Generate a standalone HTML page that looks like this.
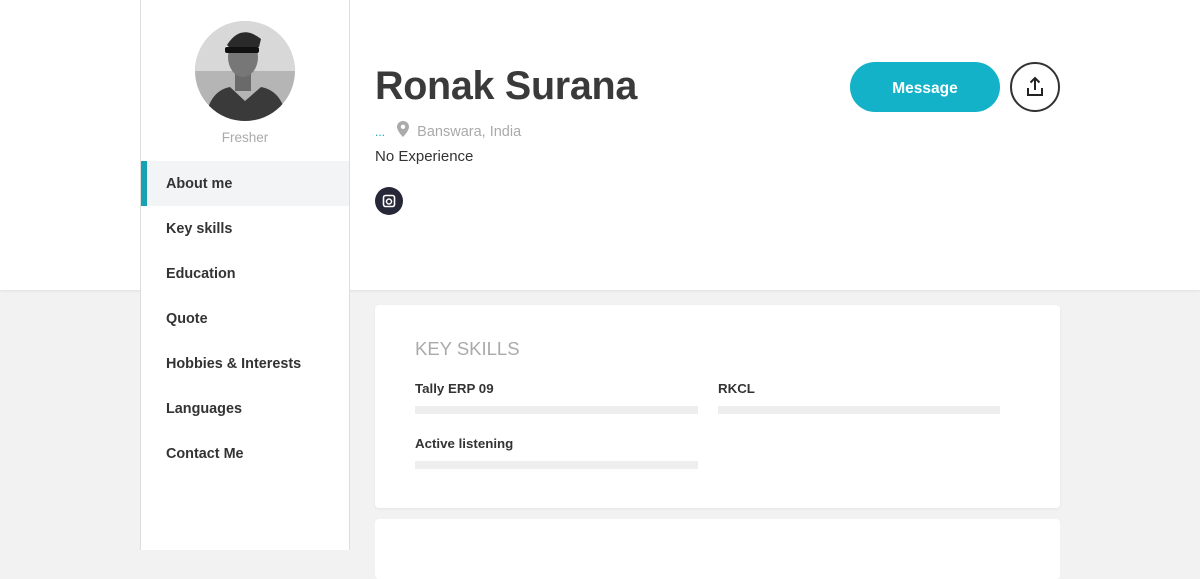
<!DOCTYPE html>
<html><head><meta charset="utf-8"><style>
*{margin:0;padding:0;box-sizing:border-box}
body{width:1200px;height:550px;overflow:hidden;background:#f2f2f2;font-family:"Liberation Sans",sans-serif;position:relative}
.top{position:absolute;left:0;top:0;width:1200px;height:290px;background:#fff;box-shadow:0 1px 3px rgba(0,0,0,.08)}
.side{position:absolute;left:140px;top:0;width:210px;height:550px;background:#fff;border-left:1px solid #ddd;border-right:1px solid #ddd}
.av{position:absolute;left:54px;top:21px;width:100px;height:100px;border-radius:50%;overflow:hidden}
.fr{position:absolute;top:130px;width:100%;text-align:center;font-size:13.5px;color:#aaa}
.nav{position:absolute;top:161px;left:0;width:208px}
.nav div{height:45px;line-height:46px;padding-left:25px;font-size:14.4px;font-weight:bold;color:#333}
.nav .a{background:#f3f4f6;border-left:6px solid #16a2b3;padding-left:19px}
h1{position:absolute;left:375px;top:64px;font-size:39.5px;font-weight:bold;color:#3a3a3a;letter-spacing:-.3px}
.loc{position:absolute;left:375px;top:121px;font-size:14.5px;color:#aaa}
.exp{position:absolute;left:375px;top:148px;font-size:15px;color:#333}
.ig{position:absolute;left:375px;top:187px;width:28px;height:28px;border-radius:50%;background:#262838}
.btn{position:absolute;left:850px;top:62px;width:150px;height:50px;border-radius:25px;background:#13b2c9;color:#fff;font-weight:bold;font-size:15.5px;text-align:center;line-height:54px}
.sh{position:absolute;left:1010px;top:62px;width:50px;height:50px;border-radius:50%;border:2px solid #333}
.card{position:absolute;left:375px;top:305px;width:685px;height:203px;background:#fff;border-radius:4px;box-shadow:0 1px 3px rgba(0,0,0,.06)}
.card2{position:absolute;left:375px;top:519px;width:685px;height:60px;background:#fff;border-radius:4px}
.ks{position:absolute;left:40px;top:33px;font-size:18.5px;color:#aaa}
.sk{position:absolute;font-size:13.3px;font-weight:bold;color:#333}
.bar{position:absolute;height:8px;background:#eeeeee}
</style></head><body>
<div class="top"></div>
<div class="side">
<div class="av"><svg width="100" height="100"><rect width="100" height="100" fill="#b5b5b5"/><rect y="0" width="100" height="50" fill="#d8d8d8"/><path d="M10 100 Q14 70 35 66 L50 80 L66 66 Q88 70 92 100Z" fill="#3a3a3a"/><rect x="40" y="50" width="16" height="20" fill="#6a6a6a"/><ellipse cx="48" cy="36" rx="15" ry="20" fill="#777"/><path d="M32 24 Q46 2 66 18 L64 26 L34 26Z" fill="#2a2a2a"/><rect x="30" y="26" width="34" height="6" rx="2" fill="#111"/></svg></div>
<div class="fr">Fresher</div>
<div class="nav"><div class="a">About me</div><div>Key skills</div><div>Education</div><div>Quote</div><div>Hobbies &amp; Interests</div><div>Languages</div><div>Contact Me</div></div>
</div>
<h1>Ronak Surana</h1>
<div class="loc"><span style="color:#16a2b3;font-size:12px">...</span> &nbsp;&nbsp;<svg width="12" height="16" viewBox="0 0 12 16" style="vertical-align:-1px"><path d="M6 0C2.7 0 0 2.6 0 5.8 0 10 6 16 6 16s6-6 6-10.2C12 2.6 9.3 0 6 0zm0 8a2.2 2.2 0 110-4.4A2.2 2.2 0 016 8z" fill="#aaa"/></svg>&nbsp; Banswara, India</div>
<div class="exp">No Experience</div>
<div class="ig"><svg width="28" height="28"><rect x="8.5" y="8.5" width="11" height="11" rx="2" fill="none" stroke="#fff" stroke-width="1.6"/><circle cx="14" cy="14.5" r="2.5" fill="none" stroke="#fff" stroke-width="1.5"/></svg></div>
<div class="btn">Message</div>
<div class="sh"><svg width="46" height="46"><path d="M23 14v12M18.5 18.5L23 14l4.5 4.5M16 24v7h14v-7" fill="none" stroke="#222" stroke-width="2"/></svg></div>
<div class="card">
<div class="ks">KEY SKILLS</div>
<div class="sk" style="left:40px;top:76px">Tally ERP 09</div><div class="bar" style="left:40px;top:101px;width:283px"></div>
<div class="sk" style="left:343px;top:76px">RKCL</div><div class="bar" style="left:343px;top:101px;width:282px"></div>
<div class="sk" style="left:40px;top:131px">Active listening</div><div class="bar" style="left:40px;top:156px;width:283px"></div>
</div>
<div class="card2"></div>
</body></html>
